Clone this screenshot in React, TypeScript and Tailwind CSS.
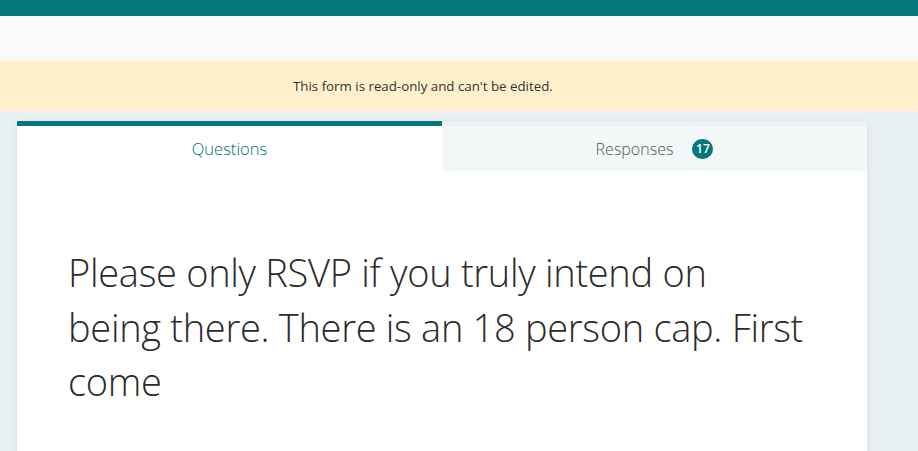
import React from 'react';

const font = { fontFamily: '"Open Sans", "Noto Sans", sans-serif' };

export default function App() {
  return (
    <div className="w-[918px] h-[451px] overflow-hidden bg-[#e8f0f2]" style={font}>
      <div className="h-4 bg-[#04777b]" />
      <div className="h-[45px] bg-[#fafafa]" />
      <div className="h-[50px] bg-[#fff0cb] flex items-center pl-[293px] pt-[1px] text-[13.3px] text-[#333]">
        This form is read-only and can't be edited.
      </div>

      <div className="ml-[17px] mt-[10px] w-[850px] shadow-[0_2px_8px_rgba(0,0,0,0.08)]">
        <div className="flex h-[50px]">
          <div className="w-[425px] bg-white border-t-[5px] border-[#04777b] flex items-center justify-center pt-[1px] text-[16.5px] text-[#036f73] font-light">
            Questions
          </div>
          <div className="w-[425px] mt-[5px] bg-[#f2f8f8] flex items-center justify-center gap-[19px] pt-[1px] text-[16px] text-[#555] font-light">
            <span>Responses</span>
            <span className="w-[21px] h-[20px] rounded-full bg-[#04777b] text-white text-[12px] font-semibold flex items-center justify-center">
              17
            </span>
          </div>
        </div>
        <div className="bg-white h-[300px] pl-[51px] pt-[74px]">
          <p className="whitespace-nowrap text-[38px] leading-[54.5px] font-light text-[#2b2b2b] tracking-[-0.3px]">
            Please only RSVP if you truly intend on
            <br />
            being there. There is an 18 person cap. First
            <br />
            come
          </p>
        </div>
      </div>
    </div>
  );
}
